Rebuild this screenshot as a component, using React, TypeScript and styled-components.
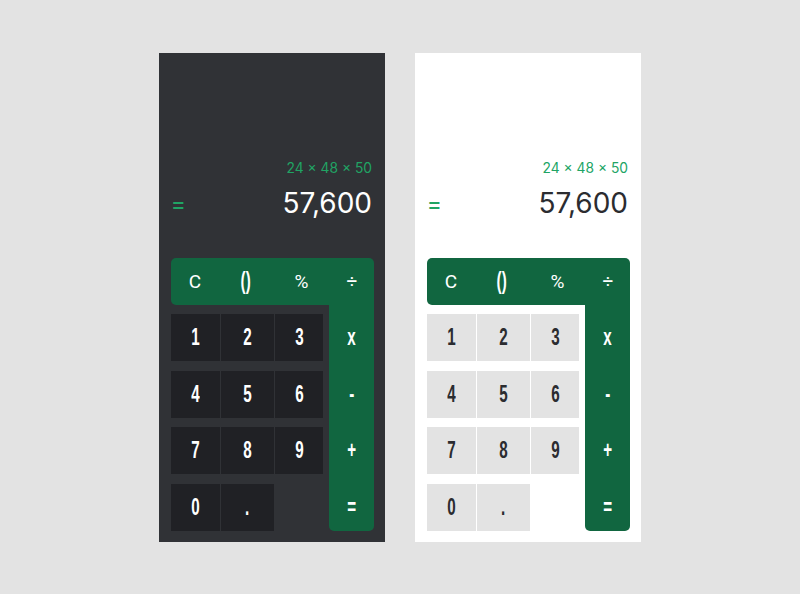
import styled, { createGlobalStyle } from 'styled-components';

type Mode = { $dark: boolean };

const palette = {
  dark: { bg: '#303236', key: '#202125', keyText: '#ffffff', result: '#ffffff' },
  light: { bg: '#ffffff', key: '#e3e3e3', keyText: '#2b2c30', result: '#2b2c30' },
};

const green = '#116640';
const accent = '#20a464';

const digits = ['1', '2', '3', '4', '5', '6', '7', '8', '9'];
const operators = ['x', '-', '+', '='];

const Calculator = ({ dark }: { dark: boolean }) => {
  return (
    <Panel $dark={dark}>
      <Display>
        <Expression>24 × 48 × 50</Expression>
        <ResultRow>
          <Equals>=</Equals>
          <Result $dark={dark}>57,600</Result>
        </ResultRow>
      </Display>
      <Keypad>
        <TopBar>
          <TopKey>C</TopKey>
          <TopKey>
            <Condensed>()</Condensed>
          </TopKey>
          <TopKey>%</TopKey>
          <TopKey>÷</TopKey>
        </TopBar>
        <Digits>
          {digits.map((d) => (
            <DigitKey key={d} $dark={dark}>
              <Condensed>{d}</Condensed>
            </DigitKey>
          ))}
          <DigitKey $dark={dark}>
            <Condensed>0</Condensed>
          </DigitKey>
          <DigitKey $dark={dark}>
            <Condensed>.</Condensed>
          </DigitKey>
        </Digits>
        <Operators>
          {operators.map((op) => (
            <OperatorKey key={op}>
              <Condensed>{op}</Condensed>
            </OperatorKey>
          ))}
        </Operators>
      </Keypad>
    </Panel>
  );
};

const App = () => {
  return (
    <>
      <GlobalStyle />
      <Page>
        <Calculator dark />
        <Calculator dark={false} />
      </Page>
    </>
  );
};

export default App;

const GlobalStyle = createGlobalStyle`
  html, body {
    margin: 0;
    padding: 0;
    background: #e3e3e3;
  }
  body {
    font-family: Inter, Roboto, sans-serif;
  }
`;

const Page = styled.div`
  width: 800px;
  height: 594px;
  display: flex;
  justify-content: center;
  align-items: center;
  gap: 30px;
`;

const Panel = styled.div<Mode>`
  width: 226px;
  height: 489px;
  box-sizing: border-box;
  padding: 0 11px 11px 12px;
  background: ${({ $dark }) => ($dark ? palette.dark.bg : palette.light.bg)};
  display: flex;
  flex-direction: column;
`;

const Display = styled.div`
  height: 206px;
  box-sizing: border-box;
  padding: 0 2px 38px 0;
  display: flex;
  flex-direction: column;
  justify-content: flex-end;
`;

const Expression = styled.div`
  color: ${accent};
  font-size: 13.8px;
  line-height: 17px;
  text-align: right;
  margin-bottom: 9px;
`;

const ResultRow = styled.div`
  display: flex;
  justify-content: space-between;
  align-items: center;
  height: 34px;
`;

const Equals = styled.span`
  color: ${accent};
  font-size: 22px;
  font-weight: 500;
  line-height: 34px;
  padding-top: 2px;
`;

const Result = styled.span<Mode>`
  color: ${({ $dark }) => ($dark ? palette.dark.result : palette.light.result)};
  font-size: 28px;
  line-height: 34px;
`;

const Keypad = styled.div`
  display: grid;
  grid-template-columns: 152px 45px;
  grid-template-rows: 47px auto;
  column-gap: 6px;
`;

const TopBar = styled.div`
  grid-column: 1 / 3;
  display: grid;
  grid-template-columns: 48px 54px 57px 44px;
  background: ${green};
  border-radius: 5px 5px 0 5px;
`;

const TopKey = styled.div`
  display: flex;
  align-items: center;
  justify-content: center;
  color: #ffffff;
  font-family: Roboto, sans-serif;
  font-size: 19px;
`;

const Condensed = styled.span`
  display: inline-block;
  font-family: 'Liberation Sans Narrow', 'Liberation Sans', sans-serif;
  font-weight: 700;
  font-size: 23px;
  transform: scaleX(0.66);
`;

const Digits = styled.div`
  display: grid;
  grid-template-columns: 49px 53px 48px;
  grid-auto-rows: 47px;
  column-gap: 1px;
  row-gap: 9.5px;
  padding-top: 9px;
`;

const DigitKey = styled.div<Mode>`
  display: flex;
  align-items: center;
  justify-content: center;
  background: ${({ $dark }) => ($dark ? palette.dark.key : palette.light.key)};
  color: ${({ $dark }) => ($dark ? palette.dark.keyText : palette.light.keyText)};
`;

const Operators = styled.div`
  display: grid;
  grid-auto-rows: 47px;
  row-gap: 9.5px;
  padding: 9px 0 0;
  background: ${green};
  border-radius: 0 0 5px 5px;
`;

const OperatorKey = styled.div`
  display: flex;
  align-items: center;
  justify-content: center;
  color: #ffffff;
`;
